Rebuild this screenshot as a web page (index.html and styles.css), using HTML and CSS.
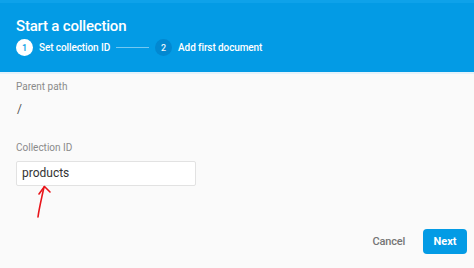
FILE: index.html
```html
<!DOCTYPE html>
<html lang="en">

<head>
    <meta charset="UTF-8">
    <meta name="viewport" content="width=device-width, initial-scale=1.0">
    <title>Start a collection</title>

    <link rel="stylesheet" href="styles.css">
</head>

<body>

    <div class="dialog">
        <div class="dialog__header">
            <h1 class="dialog__title">Start a collection</h1>
            <div class="stepper">
                <div class="stepper__step active">
                    <span class="stepper__num">1</span>
                    <span class="stepper__label">Set collection ID</span>
                </div>
                <div class="stepper__line"></div>
                <div class="stepper__step">
                    <span class="stepper__num">2</span>
                    <span class="stepper__label">Add first document</span>
                </div>
            </div>
        </div>

        <div class="dialog__body">
            <div class="field">
                <div class="field__label">Parent path</div>
                <div class="field__value">/</div>
            </div>
            <div class="field field--input">
                <div class="field__label">Collection ID</div>
                <div class="field__box">products</div>
                <svg class="field__arrow" width="30" height="40" viewBox="0 0 30 40">
                    <path d="M8 38 C9 30 11 22 14 8" fill="none" stroke="#e8141a" stroke-width="1.6" stroke-linecap="round" />
                    <path d="M9 15 L14.5 7.5 L20 13" fill="none" stroke="#e8141a" stroke-width="1.6" stroke-linecap="round" stroke-linejoin="round" />
                </svg>
            </div>
        </div>

        <div class="dialog__actions">
            <button class="btn btn--text">Cancel</button>
            <button class="btn btn--primary">Next</button>
        </div>
    </div>

</body>

</html>
```

FILE: styles.css
```css
body {
    margin: 0;
    font-family: Roboto, "Liberation Sans", sans-serif;
    background-color: #fafafa;
}

.dialog {
    width: 474px;
    height: 268px;
    display: flex;
    flex-direction: column;
    background-color: #fafafa;
}

.dialog__header {
    height: 69px;
    padding: 0 16px;
    background-color: #039be5;
    border-top: 3px solid #0ea2ea;
    border-bottom: 2px solid #e3f2fb;
    color: #fff;
}

.dialog__title {
    margin: 14px 0 0;
    font-size: 15px;
    font-weight: 500;
    line-height: 18px;
    letter-spacing: -.2px;
}

.stepper {
    display: flex;
    align-items: center;
    margin-top: 4px;
}

.stepper__step {
    display: flex;
    align-items: center;
}

.stepper__num {
    display: flex;
    align-items: center;
    justify-content: center;
    width: 17px;
    height: 17px;
    border-radius: 50%;
    background-color: #0288d1;
    color: #e6f4fc;
    font-size: 9px;
    font-weight: 500;
}

.stepper__step.active .stepper__num {
    background-color: #fff;
    color: #039be5;
}

.stepper__label {
    margin-left: 6px;
    font-size: 10px;
    font-weight: 500;
    letter-spacing: -.1px;
}

.stepper__line {
    width: 33px;
    height: 1px;
    margin: 0 6px 0 6px;
    background-color: rgba(255, 255, 255, .45);
}

.dialog__body {
    flex: 1;
    padding: 6px 16px 0;
}

.field__label {
    font-size: 10px;
    color: #8a8a8a;
    line-height: 14px;
}

.field__value {
    margin-top: 8px;
    margin-left: 1px;
    font-size: 12px;
    color: #555;
}

.field--input {
    position: relative;
    margin-top: 25px;
}

.field__box {
    width: 173px;
    height: 23px;
    margin-top: 6px;
    padding-left: 5px;
    line-height: 23px;
    background-color: #fff;
    border: 1px solid #e2e2e2;
    border-radius: 2px;
    font-size: 12px;
    color: #333;
}

.field__arrow {
    position: absolute;
    left: 14px;
    top: 38px;
}

.dialog__actions {
    display: flex;
    justify-content: flex-end;
    align-items: center;
    gap: 12px;
    padding: 0 7px 14px 0;
}

.btn {
    border: none;
    font-family: inherit;
    font-size: 11px;
    cursor: pointer;
}

.btn--text {
    background: none;
    color: #757575;
    font-weight: 500;
    letter-spacing: -.2px;
}

.btn--primary {
    width: 44px;
    height: 25px;
    border-radius: 4px;
    background-color: #039be5;
    color: #fff;
    font-weight: 700;
}
```
